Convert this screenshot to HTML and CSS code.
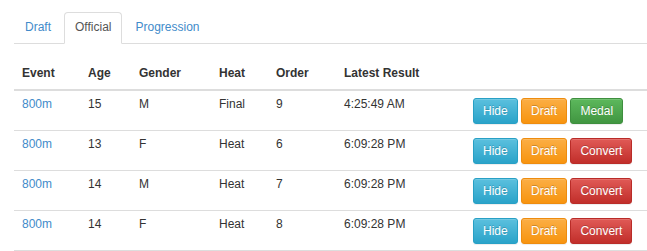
FILE: index.html
```html
<!DOCTYPE html>
<html>
<head>
<meta charset="utf-8">
<link rel="stylesheet" href="styles.css">
</head>
<body>
<div class="page">
  <ul class="tabs">
    <li class="tab"><a href="#">Draft</a></li>
    <li class="tab active"><a href="#">Official</a></li>
    <li class="tab"><a href="#">Progression</a></li>
  </ul>
  <table class="results">
    <colgroup>
      <col class="c-event"><col class="c-age"><col class="c-gender"><col class="c-heat"><col class="c-order"><col class="c-result"><col>
    </colgroup>
    <thead>
      <tr><th>Event</th><th>Age</th><th>Gender</th><th>Heat</th><th>Order</th><th>Latest Result</th><th></th></tr>
    </thead>
    <tbody>
      <tr><td><a href="#">800m</a></td><td>15</td><td>M</td><td>Final</td><td>9</td><td>4:25:49 AM</td>
        <td class="actions"><button class="btn info">Hide</button> <button class="btn warning">Draft</button> <button class="btn success">Medal</button></td></tr>
      <tr><td><a href="#">800m</a></td><td>13</td><td>F</td><td>Heat</td><td>6</td><td>6:09:28 PM</td>
        <td class="actions"><button class="btn info">Hide</button> <button class="btn warning">Draft</button> <button class="btn danger">Convert</button></td></tr>
      <tr><td><a href="#">800m</a></td><td>14</td><td>M</td><td>Heat</td><td>7</td><td>6:09:28 PM</td>
        <td class="actions"><button class="btn info">Hide</button> <button class="btn warning">Draft</button> <button class="btn danger">Convert</button></td></tr>
      <tr><td><a href="#">800m</a></td><td>14</td><td>F</td><td>Heat</td><td>8</td><td>6:09:28 PM</td>
        <td class="actions"><button class="btn info">Hide</button> <button class="btn warning">Draft</button> <button class="btn danger">Convert</button></td></tr>
    </tbody>
  </table>
</div>
</body>
</html>
```
FILE: styles.css
```css
html, body {
  margin: 0;
  padding: 0;
  background: #fff;
  overflow: hidden;
}
body {
  font-family: "Liberation Sans", Arial, sans-serif;
  font-size: 12px;
  line-height: 17px;
  color: #333;
}
a {
  color: #428bca;
  text-decoration: none;
}
.page {
  padding: 12px 0 0 14px;
}
.tabs {
  list-style: none;
  margin: 0;
  padding: 0;
  display: flex;
  border-bottom: 1px solid #ddd;
}
.tab {
  margin-right: 2px;
  margin-bottom: -1px;
}
.tab a {
  display: block;
  padding: 6px 10px 7px;
  border: 1px solid transparent;
  border-radius: 4px 4px 0 0;
}
.tab.active a {
  color: #555;
  background: #fff;
  border-color: #ddd;
  border-bottom-color: #fff;
}
.results {
  margin-top: 13px;
  width: 633px;
  border-collapse: collapse;
  table-layout: fixed;
}
.c-event { width: 66px; }
.c-age { width: 51px; }
.c-gender { width: 80px; }
.c-heat { width: 57px; }
.c-order { width: 68px; }
.c-result { width: 129px; }
.results th {
  text-align: left;
  font-weight: bold;
  padding: 8px 8px 7px;
  border-bottom: 2px solid #ddd;
  vertical-align: top;
}
.results td {
  padding: 5px 8px 0;
  height: 34px;
  vertical-align: top;
  border-bottom: 1px solid #ddd;
  white-space: nowrap;
}
.results td.actions {
  padding: 7px 8px 0;
  height: 32px;
}
.btn {
  font-family: "Liberation Sans", Arial, sans-serif;
  font-size: 12px;
  line-height: 16px;
  padding: 4px 9px;
  border: 1px solid;
  border-radius: 3px;
  color: #fff;
  text-shadow: 0 -1px 0 rgba(0, 0, 0, 0.2);
  box-shadow: inset 0 1px 0 rgba(255, 255, 255, 0.15), 0 1px 1px rgba(0, 0, 0, 0.075);
  vertical-align: top;
  cursor: pointer;
}
.btn.info {
  background: linear-gradient(#5bc0de, #2aa3c9);
  border-color: #28a0c5;
}
.btn.warning {
  background: linear-gradient(#fbae45, #f7940f);
  border-color: #ee8c0e;
}
.btn.success {
  background: linear-gradient(#5cb85c, #419641);
  border-color: #3e8f3e;
}
.btn.danger {
  background: linear-gradient(#e05a56, #c12e2a);
  border-color: #b92c28;
}
```
